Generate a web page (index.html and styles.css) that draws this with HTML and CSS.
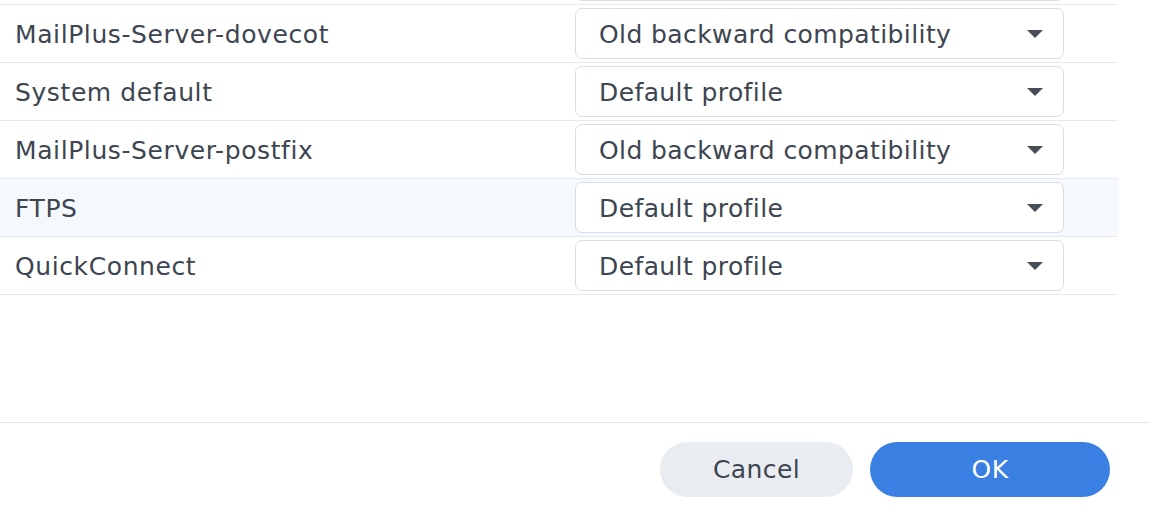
FILE: index.html
```html
<!DOCTYPE html>
<html>
<head>
<meta charset="utf-8">
<link rel="stylesheet" href="styles.css">
</head>
<body>
<div class="dialog">
  <div class="list">
    <div class="row row-partial">
      <div class="label"></div>
      <div class="select"></div>
    </div>
    <div class="row">
      <div class="label">MailPlus-Server-dovecot</div>
      <div class="select"><span class="value">Old backward compatibility</span><svg class="caret" viewBox="0 0 16 8" width="16" height="8"><path d="M0 0H16L8 8Z"/></svg></div>
    </div>
    <div class="row">
      <div class="label">System default</div>
      <div class="select"><span class="value">Default profile</span><svg class="caret" viewBox="0 0 16 8" width="16" height="8"><path d="M0 0H16L8 8Z"/></svg></div>
    </div>
    <div class="row">
      <div class="label">MailPlus-Server-postfix</div>
      <div class="select"><span class="value">Old backward compatibility</span><svg class="caret" viewBox="0 0 16 8" width="16" height="8"><path d="M0 0H16L8 8Z"/></svg></div>
    </div>
    <div class="row row-hover">
      <div class="label">FTPS</div>
      <div class="select"><span class="value">Default profile</span><svg class="caret" viewBox="0 0 16 8" width="16" height="8"><path d="M0 0H16L8 8Z"/></svg></div>
    </div>
    <div class="row">
      <div class="label">QuickConnect</div>
      <div class="select"><span class="value">Default profile</span><svg class="caret" viewBox="0 0 16 8" width="16" height="8"><path d="M0 0H16L8 8Z"/></svg></div>
    </div>
  </div>
  <div class="footer">
    <button class="btn btn-cancel">Cancel</button>
    <button class="btn btn-ok">OK</button>
  </div>
</div>
</body>
</html>
```
FILE: styles.css
```css
html, body {
  margin: 0;
  padding: 0;
  background: #ffffff;
}
body {
  font-family: "DejaVu Sans", Verdana, sans-serif;
  font-size: 25px;
  letter-spacing: 0.4px;
  color: #3d4550;
}
.dialog {
  width: 1150px;
  height: 514px;
  display: flex;
  flex-direction: column;
  overflow: hidden;
}
.list {
  height: 422px;
  width: 1118px;
  overflow: hidden;
  flex: none;
}
.row {
  height: 57px;
  border-bottom: 1px solid #e6eaef;
  display: flex;
  align-items: center;
  box-sizing: content-box;
}
.row-partial {
  margin-top: -53px;
}
.row-hover {
  background: #f5f8fd;
}
.label {
  width: 575px;
  padding: 1px 0 0 15px;
  box-sizing: border-box;
  flex: none;
  white-space: nowrap;
  letter-spacing: 0.6px;
}
.select {
  width: 489px;
  height: 51px;
  box-sizing: border-box;
  border: 1.5px solid #d7dee7;
  border-radius: 7px;
  background: #ffffff;
  display: flex;
  align-items: center;
  padding: 1px 20px 0 23px;
  flex: none;
}
.value {
  flex: 1;
  white-space: nowrap;
}
.caret {
  fill: #474e58;
  display: block;
}
.footer {
  flex: 1;
  border-top: 1px solid #e3e7ec;
  display: flex;
  justify-content: flex-end;
  align-items: flex-start;
  gap: 17px;
  padding: 19px 40px 0 0;
}
.btn {
  height: 55px;
  border: none;
  border-radius: 28px;
  font-family: "DejaVu Sans", Verdana, sans-serif;
  font-size: 25px;
  letter-spacing: 0.4px;
  padding: 0;
  cursor: pointer;
}
.btn-cancel {
  width: 193px;
  background: #e9edf1;
  color: #3d4550;
}
.btn-ok {
  width: 240px;
  background: #3a80e3;
  color: #ffffff;
}
```
